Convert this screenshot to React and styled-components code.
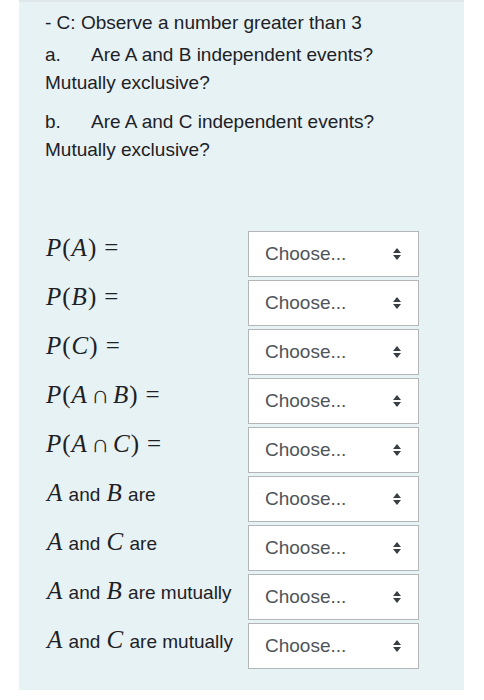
import styled, { createGlobalStyle } from 'styled-components';

const Global = createGlobalStyle`
    body {
        margin: 0;
        background: #ffffff;
        font-family: 'Liberation Sans', Arial, sans-serif;
        color: #1d2125;
    }
`;

const Panel = styled.div`
    margin: 0 20px 10px 19px;
    height: 690px;
    box-sizing: border-box;
    background: #e7f2f5;
    border-top: 2px solid #dfe7ea;
    padding: 7px 26px 0 26px;
`;

const Line = styled.p`
    margin: 0 0 ${(p) => p.$gap || 0}px;
    font-size: 19px;
    line-height: 28px;
`;

const Marker = styled.span`
    display: inline-block;
    width: 46px;
`;

const Rows = styled.div`
    display: flex;
    flex-direction: column;
    gap: 3px;
    margin-top: 67px;
`;

const Row = styled.div`
    display: grid;
    grid-template-columns: 203px 171px;
    align-items: start;
`;

const Label = styled.div`
    padding: 2px 0 0 1px;
    font-size: 19px;
    line-height: 30px;
    white-space: nowrap;
`;

const M = styled.span`
    font-family: 'Liberation Serif', 'DejaVu Serif', serif;
    font-style: ${(p) => (p.$up ? 'normal' : 'italic')};
    font-size: 25px;
    margin: 0 ${(p) => p.$space ?? 1}px;
`;

const Select = styled.div`
    height: 46px;
    box-sizing: border-box;
    border: 1.5px solid #b3b6b8;
    background: #ffffff;
    display: flex;
    align-items: center;
    justify-content: space-between;
    padding: 0 17px 0 16px;
    font-size: 19px;
    color: #4f5459;
`;

const Arrows = () => (
    <svg width="8" height="12" viewBox="0 0 8 12">
        <path d="M4 0 L8 5 H0 Z" fill="#3a3f44" />
        <path d="M0 7 H8 L4 12 Z" fill="#3a3f44" />
    </svg>
);

const Eq = ({ children }) => (
    <>
        <M $space={0}>P</M>
        <M $up>(</M>
        {children}
        <M $up>)</M>
        <M $up $space={7}>=</M>
    </>
);

const Cap = () => <M $up $space={4}>∩</M>;

const rows = [
    <Eq><M $space={0}>A</M></Eq>,
    <Eq><M $space={0}>B</M></Eq>,
    <Eq><M $space={0}>C</M></Eq>,
    <Eq><M $space={0}>A</M><Cap /><M $space={0}>B</M></Eq>,
    <Eq><M $space={0}>A</M><Cap /><M $space={0}>C</M></Eq>,
    <><M>A</M> and <M>B</M> are</>,
    <><M>A</M> and <M>C</M> are</>,
    <><M>A</M> and <M>B</M> are mutually</>,
    <><M>A</M> and <M>C</M> are mutually</>,
];

const App = () => {
    return (
        <>
            <Global />
            <Panel>
                <Line $gap={4}>- C: Observe a number greater than 3</Line>
                <Line>
                    <Marker>a.</Marker>Are A and B independent events?
                </Line>
                <Line $gap={11}>Mutually exclusive?</Line>
                <Line>
                    <Marker>b.</Marker>Are A and C independent events?
                </Line>
                <Line>Mutually exclusive?</Line>
                <Rows>
                    {rows.map((label, i) => (
                        <Row key={i}>
                            <Label>{label}</Label>
                            <Select>
                                Choose...
                                <Arrows />
                            </Select>
                        </Row>
                    ))}
                </Rows>
            </Panel>
        </>
    );
};

export default App;
